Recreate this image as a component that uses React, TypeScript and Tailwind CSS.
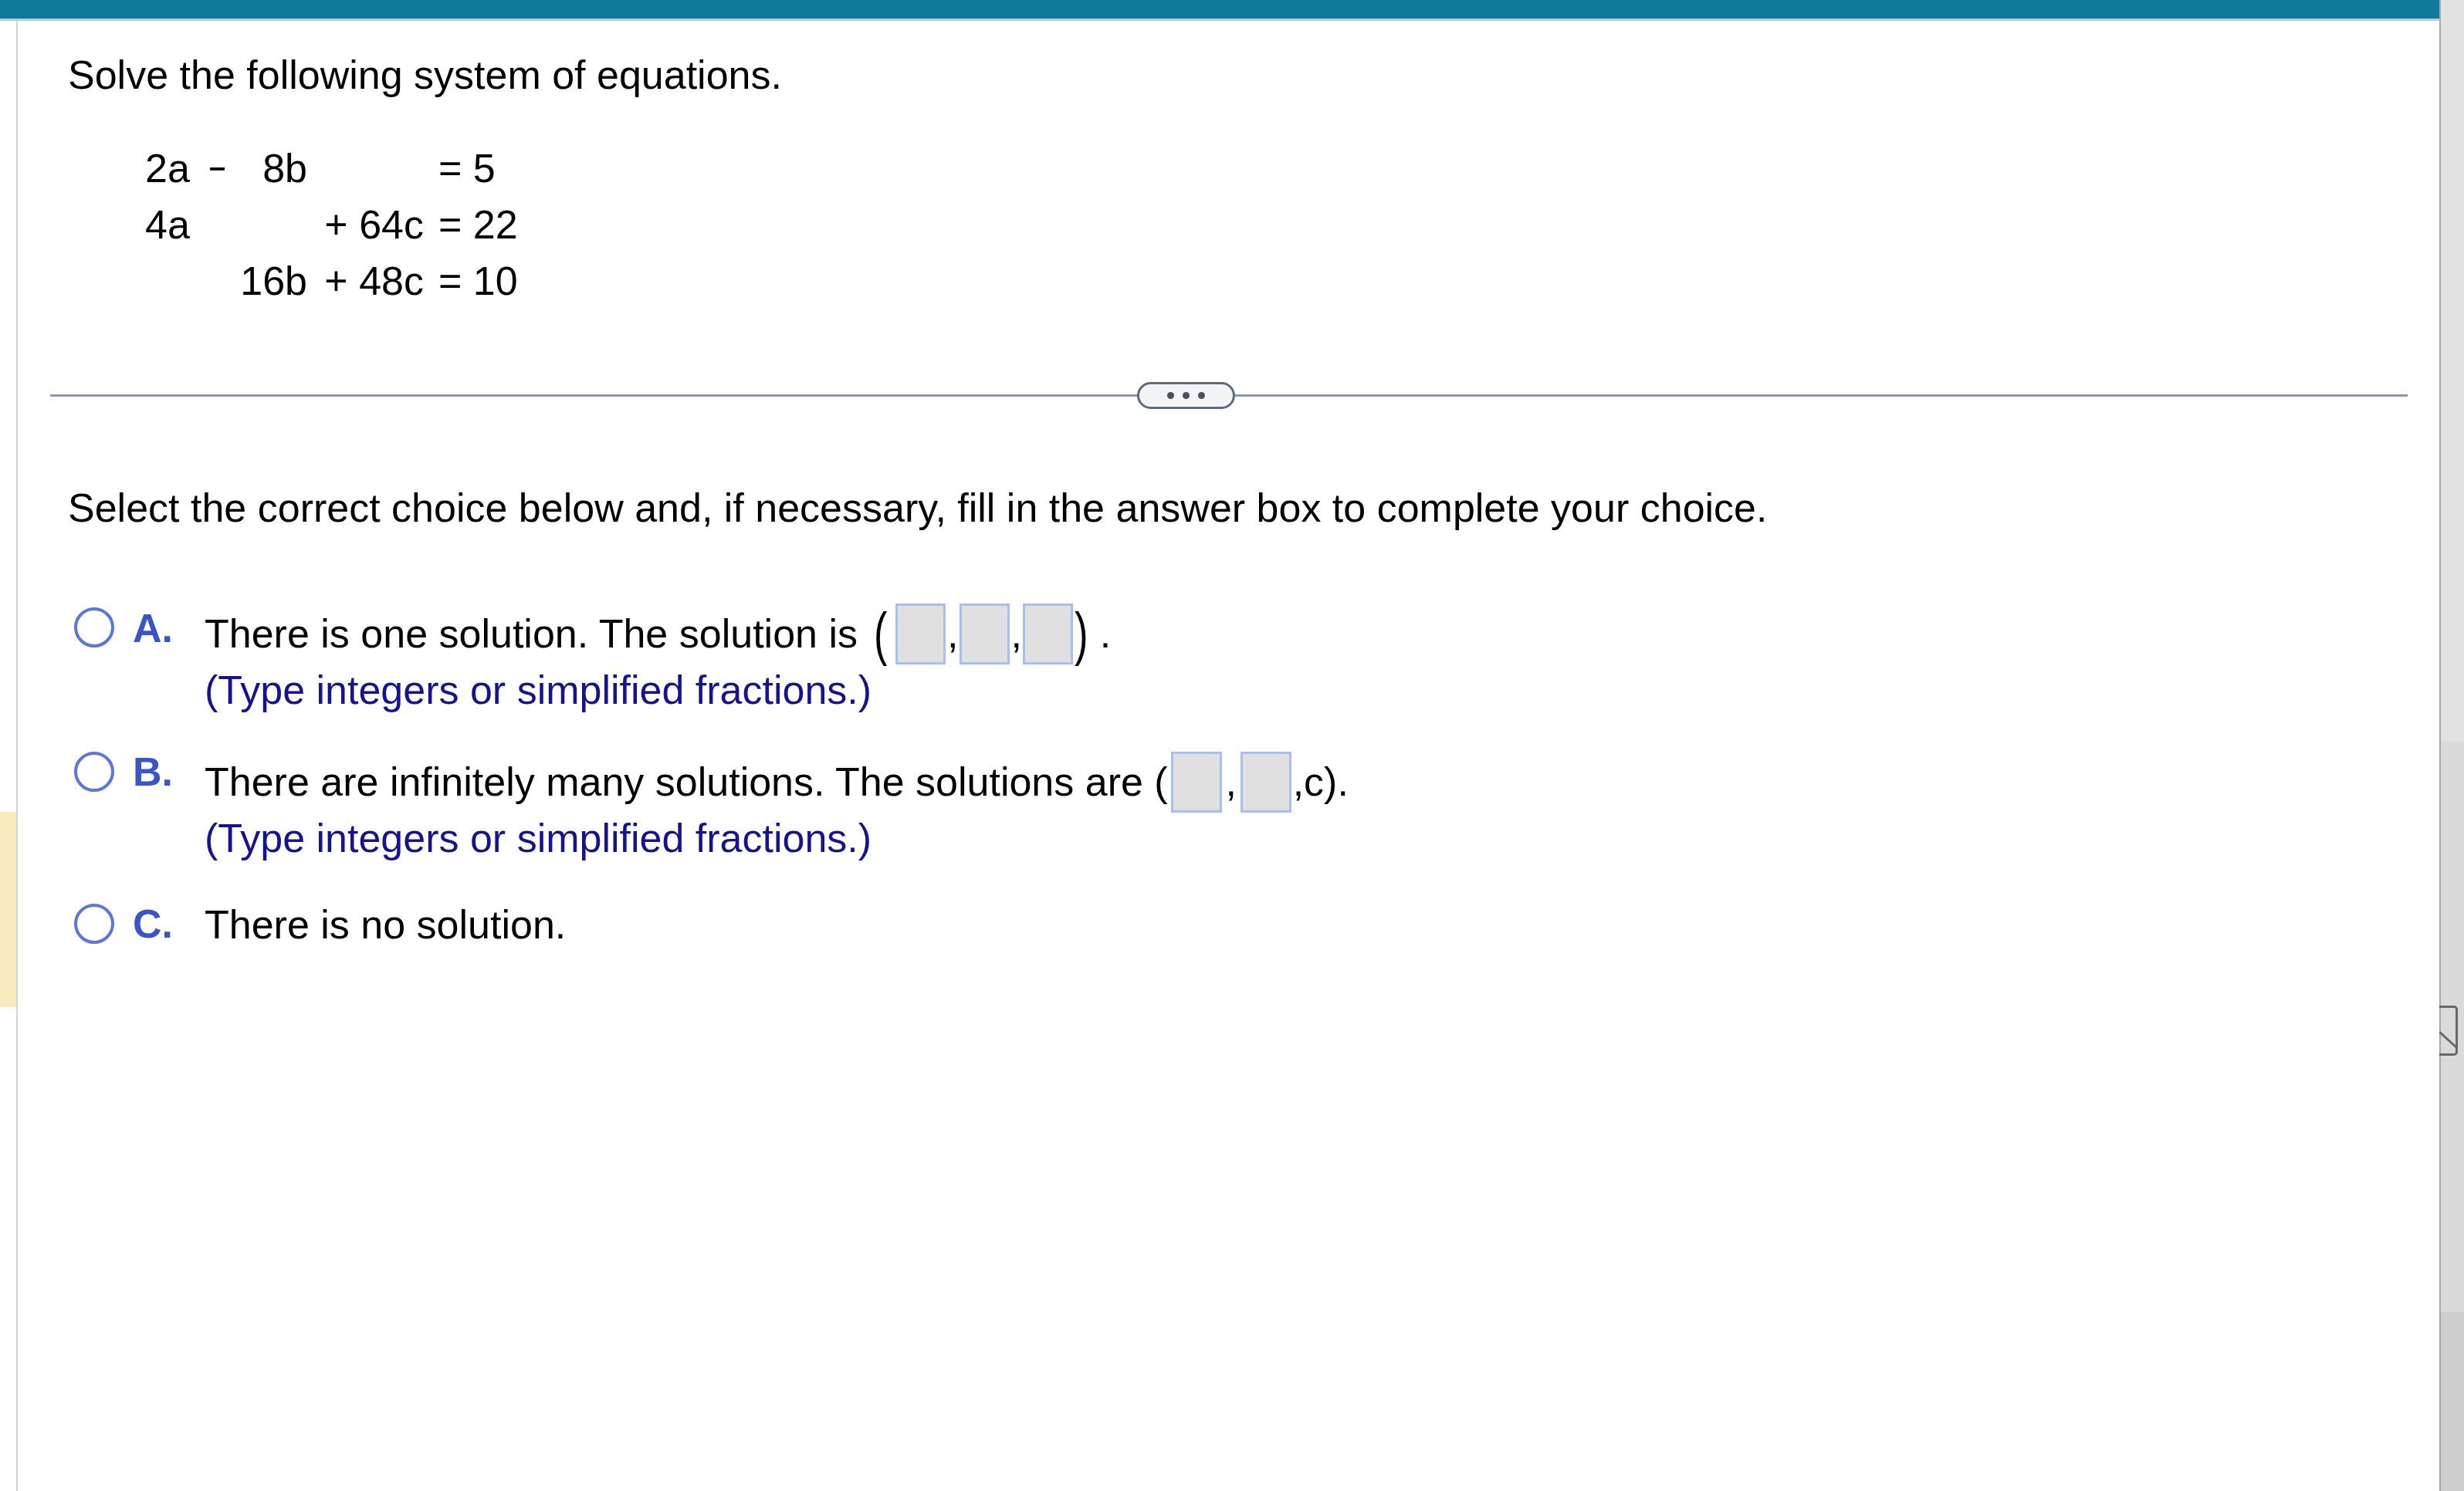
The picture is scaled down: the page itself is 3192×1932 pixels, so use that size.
import React from "react";

function Blank({ className = "" }: { className?: string }) {
  return (
    <span
      className={`inline-block h-[79px] w-[65px] shrink-0 border-[3px] border-[#a6bfec] bg-[#e0e0e0] ${className}`}
    />
  );
}

function Radio({ className = "" }: { className?: string }) {
  return (
    <span
      className={`block h-[52px] w-[52px] shrink-0 rounded-full border-[4px] border-[#5a76d8] bg-white ${className}`}
    />
  );
}

function Label({ text, className = "" }: { text: string; className?: string }) {
  return (
    <span className={`block w-[117px] shrink-0 pl-[24px] text-[52px] font-bold leading-[52px] text-[#3a55c8] ${className}`}>
      {text}
    </span>
  );
}

const hint = "(Type integers or simplified fractions.)";

export default function App() {
  return (
    <div className="flex h-[1932px] w-[3192px] overflow-hidden bg-white font-['Liberation_Sans',Arial,sans-serif] text-[52px] leading-[73px] text-black">
      <div className="flex w-[3160px] flex-col">
        <div className="h-[24px] bg-[#0e7a9c]" />
        <div className="h-[3px] bg-[#b9ccd6]" />

        <div className="flex flex-1">
          {/* left rail */}
          <div className="flex w-[21px] flex-col">
            <div className="mt-[1025px] h-[253px] bg-[#f8ebbe]" />
          </div>
          <div className="w-[2px] bg-[#d0d6df]" />

          {/* question */}
          <div className="flex flex-1 flex-col pt-[34px]">
            <p className="ml-[65px]">Solve the following system of equations.</p>

            <div className="ml-[165px] mt-[48px] flex flex-col">
              <div className="flex">
                <span className="w-[82px]">2a</span>
                <span className="w-[30px]">
                  <span className="inline-block origin-left scale-x-[0.75]">−</span>
                </span>
                <span className="w-[98px] text-right">8b</span>
                <span className="w-[151px]" />
                <span className="ml-[19px]">= 5</span>
              </div>
              <div className="flex">
                <span className="w-[82px]">4a</span>
                <span className="w-[30px]" />
                <span className="w-[98px]" />
                <span className="w-[151px] text-right">+ 64c</span>
                <span className="ml-[19px]">= 22</span>
              </div>
              <div className="flex">
                <span className="w-[82px]" />
                <span className="w-[30px]" />
                <span className="w-[98px] text-right">16b</span>
                <span className="w-[151px] text-right">+ 48c</span>
                <span className="ml-[19px]">= 10</span>
              </div>
            </div>

            <div className="relative ml-[42px] mr-[41px] mt-[110px] h-[3px] bg-[#8d97a5]">
              <div className="absolute left-[1408px] top-[-16px] flex h-[35px] w-[127px] items-center justify-center gap-[11px] rounded-full border-[3px] border-[#5e6b7a] bg-[#f3f4f6]">
                <span className="h-[9px] w-[9px] rounded-full bg-[#4a515c]" />
                <span className="h-[9px] w-[9px] rounded-full bg-[#4a515c]" />
                <span className="h-[9px] w-[9px] rounded-full bg-[#4a515c]" />
              </div>
            </div>

            <p className="ml-[65px] mt-[108px]">
              Select the correct choice below and, if necessary, fill in the answer box to complete your choice.
            </p>

            {/* choice A */}
            <div className="ml-[73px] mt-[90px] flex items-start">
              <Radio className="mt-[2px]" />
              <Label text="A." className="mt-[3px]" />
              <div className="flex flex-col">
                <div className="flex h-[73px] items-center">
                  <span>There is one solution. The solution is</span>
                  <span className="ml-[21px] inline-block origin-center scale-y-[1.45]">(</span>
                  <Blank className="ml-[11px] w-[64px]" />
                  <span className="w-[18px] text-center">,</span>
                  <Blank className="w-[64px]" />
                  <span className="w-[17px] text-center">,</span>
                  <Blank className="w-[64px]" />
                  <span className="ml-[2px] inline-block origin-center scale-y-[1.45]">)</span>
                  <span className="ml-[15px]">.</span>
                </div>
                <p className="text-[#15148e]">{hint}</p>
              </div>
            </div>

            {/* choice B */}
            <div className="ml-[73px] mt-[43px] flex items-start">
              <Radio />
              <Label text="B." />
              <div className="mt-[3px] flex flex-col">
                <div className="flex h-[73px] items-center">
                  <span className="whitespace-pre">There are infinitely many solutions. The solutions are (</span>
                  <Blank className="ml-[4px] w-[66px]" />
                  <span className="w-[24px] text-center">,</span>
                  <Blank className="w-[66px]" />
                  <span className="ml-[2px]">,c).</span>
                </div>
                <p className="text-[#15148e]">{hint}</p>
              </div>
            </div>

            {/* choice C */}
            <div className="ml-[73px] mt-[39px] flex items-start">
              <Radio className="mt-[9px]" />
              <Label text="C." className="mt-[9px]" />
              <p>There is no solution.</p>
            </div>
          </div>
        </div>
      </div>

      {/* scrollbar */}
      <div className="relative flex w-[32px] flex-col border-l-[2px] border-[#a9a9a9]">
        <div className="h-[961px] bg-[#e2e2e2]" />
        <div className="h-[739px] bg-[#dadada]" />
        <div className="flex-1 bg-[#cecece]" />
        <svg className="absolute left-[-2px] top-[1302px]" width="26" height="68" viewBox="0 0 26 68" fill="none">
          <path d="M0 2.5 H19 a3.5 3.5 0 0 1 3.5 3.5 V61 a3.5 3.5 0 0 1 -3.5 3.5 H0" stroke="#686868" strokeWidth="3" />
          <path d="M0 35 L22 55" stroke="#686868" strokeWidth="3" />
        </svg>
      </div>
    </div>
  );
}
